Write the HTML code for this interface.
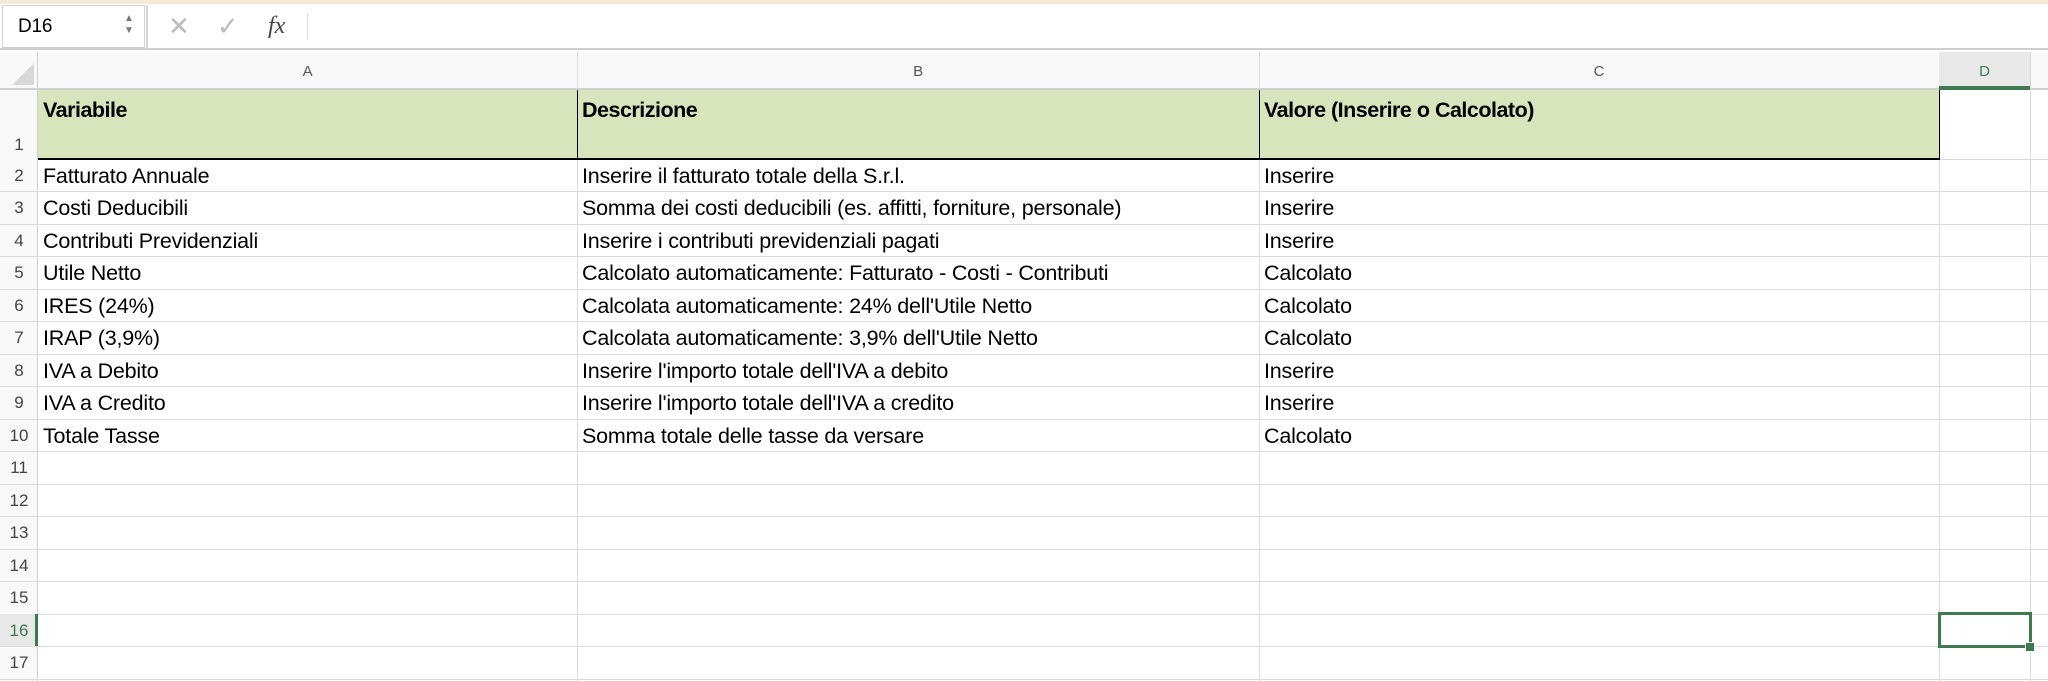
<!DOCTYPE html>
<html><head><meta charset="utf-8"><style>
body{margin:0;width:2048px;height:681px;overflow:hidden;background:#fff;font-family:"Liberation Sans",sans-serif;position:relative}
div{position:absolute;box-sizing:border-box}
.t{font-size:21.5px;color:#000;white-space:nowrap;line-height:32px;letter-spacing:-0.2px}
.rn{left:0;width:38px;text-align:center;font-size:17px;color:#444;line-height:32px}
.h{height:1px;background:#dadada}
.v{width:1px;background:#dadada}
b{font-weight:bold}
</style></head><body>
<div style="left:0;top:0;width:2048px;height:4px;background:#f4ead8"></div>
<div style="left:0;top:4px;width:2048px;height:46px;background:#fff;border-bottom:2px solid #cfcfcf"></div>
<div style="left:2px;top:5px;width:143px;height:43px;border:1px solid #d0d0d0;background:#fff"></div>
<div class="t" style="left:18px;top:11px;font-size:19px">D16</div>
<div style="left:124px;top:13px;color:#777;font-size:10px;line-height:12px">▲<br>▼</div>
<div style="left:146px;top:5px;width:2px;height:44px;background:#d6d6d6"></div>
<div style="left:168px;top:8px;color:#bbb;font-size:26px;line-height:36px">✕</div>
<div style="left:217px;top:8px;color:#bbb;font-size:26px;line-height:36px">✓</div>
<div style="left:268px;top:8px;color:#444;font-size:24px;line-height:36px;font-family:'Liberation Serif',serif;font-style:italic">fx</div>
<div style="left:307px;top:14px;width:1px;height:26px;background:#ddd"></div>
<div style="left:0;top:52px;width:2048px;height:38px;background:#f8f8f8;border-bottom:2px solid #d0d0d0"></div>
<div style="left:0;top:52px;width:38px;height:38px;border-right:1px solid #d0d0d0"></div>
<svg style="position:absolute;left:8px;top:61px" width="28" height="26"><polygon points="26,2 26,24 4,24" fill="#d8d8d8"/></svg>
<div style="left:577px;top:52px;width:1px;height:38px;background:#d8d8d8"></div>
<div style="left:1259px;top:52px;width:1px;height:38px;background:#d8d8d8"></div>
<div style="left:1939px;top:52px;width:1px;height:38px;background:#d8d8d8"></div>
<div style="left:2030px;top:52px;width:1px;height:38px;background:#d8d8d8"></div>
<div style="left:1939px;top:52px;width:91px;height:38px;background:#e8e8e8;border-bottom:4px solid #3e7a4d"></div>
<div class="t" style="left:38px;top:56px;width:539px;text-align:center;color:#555;font-size:15px">A</div>
<div class="t" style="left:577px;top:56px;width:682px;text-align:center;color:#555;font-size:15px">B</div>
<div class="t" style="left:1259px;top:56px;width:680px;text-align:center;color:#555;font-size:15px">C</div>
<div class="t" style="left:1939px;top:56px;width:91px;text-align:center;color:#3e7a4d;font-size:15px">D</div>
<div style="left:0;top:90px;width:38px;height:591px;background:#f8f8f8;border-right:1px solid #d0d0d0"></div>
<div class="v" style="left:577px;top:159px;height:522px"></div>
<div class="v" style="left:1259px;top:159px;height:522px"></div>
<div class="v" style="left:1939px;top:90px;height:591px"></div>
<div class="v" style="left:2030px;top:90px;height:591px"></div>
<div class="h" style="left:0;top:191px;width:2048px"></div>
<div class="h" style="left:0;top:224px;width:2048px"></div>
<div class="h" style="left:0;top:256px;width:2048px"></div>
<div class="h" style="left:0;top:289px;width:2048px"></div>
<div class="h" style="left:0;top:321px;width:2048px"></div>
<div class="h" style="left:0;top:354px;width:2048px"></div>
<div class="h" style="left:0;top:386px;width:2048px"></div>
<div class="h" style="left:0;top:419px;width:2048px"></div>
<div class="h" style="left:0;top:451px;width:2048px"></div>
<div class="h" style="left:0;top:484px;width:2048px"></div>
<div class="h" style="left:0;top:516px;width:2048px"></div>
<div class="h" style="left:0;top:549px;width:2048px"></div>
<div class="h" style="left:0;top:581px;width:2048px"></div>
<div class="h" style="left:0;top:614px;width:2048px"></div>
<div class="h" style="left:0;top:646px;width:2048px"></div>
<div class="h" style="left:0;top:679px;width:2048px"></div>
<div class="h" style="left:1939px;top:159px;width:109px"></div>
<div style="left:38px;top:90px;width:1902px;height:70px;background:#d8e4bc;border-right:1px solid #000;border-bottom:2px solid #000"></div>
<div style="left:577px;top:90px;width:1px;height:70px;background:#000"></div>
<div style="left:1259px;top:90px;width:1px;height:70px;background:#000"></div>
<div class="t" style="left:43px;top:94px;letter-spacing:-0.5px"><b>Variabile</b></div>
<div class="t" style="left:582px;top:94px;letter-spacing:-0.5px"><b>Descrizione</b></div>
<div class="t" style="left:1264px;top:94px;letter-spacing:-0.5px"><b>Valore (Inserire o Calcolato)</b></div>
<div class="rn" style="top:129px">1</div>
<div class="rn" style="top:160px">2</div><div class="t" style="left:43px;top:160px">Fatturato Annuale</div><div class="t" style="left:582px;top:160px">Inserire il fatturato totale della S.r.l.</div><div class="t" style="left:1264px;top:160px">Inserire</div>
<div class="rn" style="top:192px">3</div><div class="t" style="left:43px;top:192px">Costi Deducibili</div><div class="t" style="left:582px;top:192px">Somma dei costi deducibili (es. affitti, forniture, personale)</div><div class="t" style="left:1264px;top:192px">Inserire</div>
<div class="rn" style="top:225px">4</div><div class="t" style="left:43px;top:225px">Contributi Previdenziali</div><div class="t" style="left:582px;top:225px">Inserire i contributi previdenziali pagati</div><div class="t" style="left:1264px;top:225px">Inserire</div>
<div class="rn" style="top:257px">5</div><div class="t" style="left:43px;top:257px">Utile Netto</div><div class="t" style="left:582px;top:257px">Calcolato automaticamente: Fatturato - Costi - Contributi</div><div class="t" style="left:1264px;top:257px">Calcolato</div>
<div class="rn" style="top:290px">6</div><div class="t" style="left:43px;top:290px">IRES (24%)</div><div class="t" style="left:582px;top:290px">Calcolata automaticamente: 24% dell'Utile Netto</div><div class="t" style="left:1264px;top:290px">Calcolato</div>
<div class="rn" style="top:322px">7</div><div class="t" style="left:43px;top:322px">IRAP (3,9%)</div><div class="t" style="left:582px;top:322px">Calcolata automaticamente: 3,9% dell'Utile Netto</div><div class="t" style="left:1264px;top:322px">Calcolato</div>
<div class="rn" style="top:355px">8</div><div class="t" style="left:43px;top:355px">IVA a Debito</div><div class="t" style="left:582px;top:355px">Inserire l'importo totale dell'IVA a debito</div><div class="t" style="left:1264px;top:355px">Inserire</div>
<div class="rn" style="top:387px">9</div><div class="t" style="left:43px;top:387px">IVA a Credito</div><div class="t" style="left:582px;top:387px">Inserire l'importo totale dell'IVA a credito</div><div class="t" style="left:1264px;top:387px">Inserire</div>
<div class="rn" style="top:420px">10</div><div class="t" style="left:43px;top:420px">Totale Tasse</div><div class="t" style="left:582px;top:420px">Somma totale delle tasse da versare</div><div class="t" style="left:1264px;top:420px">Calcolato</div>
<div class="rn" style="top:452px">11</div>
<div class="rn" style="top:485px">12</div>
<div class="rn" style="top:517px">13</div>
<div class="rn" style="top:550px">14</div>
<div class="rn" style="top:582px">15</div>
<div style="left:0;top:614px;width:38px;height:32px;background:#e8e8e8;border-right:3px solid #3e7a4d"></div>
<div class="rn" style="top:615px;color:#3e7a4d">16</div>
<div class="rn" style="top:647px">17</div>
<div style="left:1938px;top:612px;width:94px;height:36px;border:3px solid #3e7a4d"></div>
<div style="left:2025px;top:642px;width:10px;height:10px;background:#3e7a4d;border:1px solid #fff"></div>
</body></html>
